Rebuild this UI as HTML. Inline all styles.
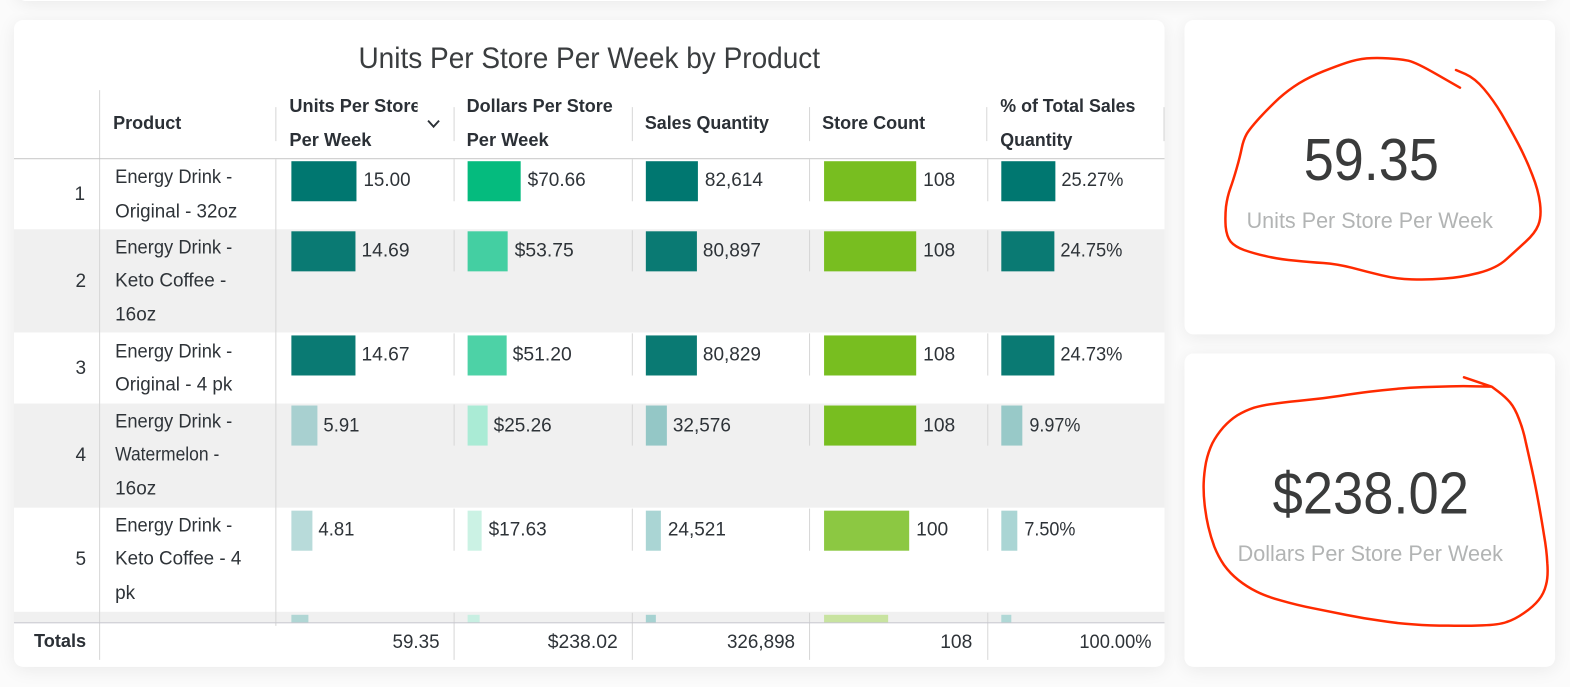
<!DOCTYPE html>
<html lang="en"><head><meta charset="utf-8"><title>Units Per Store Per Week by Product</title>
<style>
html,body{margin:0;padding:0;width:1570px;height:686px;overflow:hidden;background:#fbfbfb;font-family:"Liberation Sans",sans-serif}
.wrap{position:absolute;left:0;top:0;width:1570px;height:686px;transform:scale(1.0013);transform-origin:0 0}
.card{position:absolute;background:#fff;border-radius:9px;box-shadow:0 3px 18px rgba(0,0,0,.07)}
svg{position:absolute;left:0;top:0}
text{font-family:"Liberation Sans",sans-serif}
.v text{font-size:19px;fill:#2e3338}
.h text{font-size:18px;font-weight:bold;fill:#2b3036}
</style></head>
<body>
<div class="wrap">
<div class="card" style="left:17px;top:-40px;width:1533px;height:41px"></div>
<div class="card" style="left:14px;top:20px;width:1149px;height:646px"></div>
<div class="card" style="left:1182.5px;top:20px;width:370.5px;height:314px"></div>
<div class="card" style="left:1182.5px;top:353px;width:370.5px;height:313px"></div>
<svg width="1570" height="686" viewBox="0 0 1570 686">
<defs><clipPath id="c1"><rect x="280" y="90" width="137" height="40"/></clipPath></defs>
<g fill="#f0f0f0"><rect x="14" y="229" width="1149" height="103"/><rect x="14" y="403" width="1149" height="104"/><rect x="14" y="611" width="1149" height="11"/></g>
<g fill="#007770"><rect x="291" y="161" width="65" height="40"/><rect x="645" y="161" width="52" height="40"/><rect x="1000" y="161" width="54" height="40"/></g>
<rect x="467" y="161" width="53" height="40" fill="#05bb7e"/>
<g fill="#78be20"><rect x="823" y="161" width="92" height="40"/><rect x="823" y="231" width="92" height="40"/><rect x="823" y="335" width="92" height="40"/><rect x="823" y="405" width="92" height="40"/></g>
<g fill="#0a7a73"><rect x="291" y="231" width="64" height="40"/><rect x="645" y="231" width="51" height="40"/><rect x="1000" y="231" width="53" height="40"/><rect x="291" y="335" width="64" height="40"/><rect x="645" y="335" width="51" height="40"/><rect x="1000" y="335" width="53" height="40"/></g>
<rect x="467" y="231" width="40" height="40" fill="#44cfa2"/><rect x="467" y="335" width="39" height="40" fill="#4dd2a6"/>
<rect x="291" y="405" width="26" height="40" fill="#a8d0d0"/><rect x="467" y="405" width="20" height="40" fill="#aaebd5"/><rect x="645" y="405" width="21" height="40" fill="#94c7c6"/><rect x="1000" y="405" width="21" height="40" fill="#98c9c8"/>
<rect x="291" y="510" width="21" height="40" fill="#b8dbda"/><rect x="467" y="510" width="14" height="40" fill="#cbf2e4"/><rect x="645" y="510" width="15" height="40" fill="#aad5d4"/><rect x="823" y="510" width="85" height="40" fill="#8cc842"/><rect x="1000" y="510" width="16" height="40" fill="#aad5d4"/>
<rect x="291" y="614" width="17" height="8" fill="#b0d6d4"/><rect x="467" y="614" width="12" height="8" fill="#c8efe2"/><rect x="645" y="614" width="10" height="8" fill="#a6d2d1"/><rect x="823" y="614" width="64" height="8" fill="#c8e3a0"/><rect x="1000" y="614" width="10" height="8" fill="#b0d8d6"/>
<g stroke="#d6d6d6" stroke-width="1" fill="none">
<path d="M99.5 90V659M275.5 159V625M275.5 107V141M453.5 107V141M631.5 107V141M808.5 107V141M985.5 107V141M1162.5 107V141"/>
<path d="M453.5 159V201M631.5 159V201M808.5 159V201M986.5 159V201M453.5 230V271M631.5 230V271M808.5 230V271M986.5 230V271M453.5 333V375M631.5 333V375M808.5 333V375M986.5 333V375M453.5 404V445M631.5 404V445M808.5 404V445M986.5 404V445M453.5 508V550M631.5 508V550M808.5 508V550M986.5 508V550M453.5 612V659M631.5 612V659M808.5 612V659M986.5 612V659"/>
</g>
<rect x="14" y="158" width="1149" height="1" fill="#c6c6c6"/><rect x="14" y="621.5" width="1149" height="1" fill="#c6c6ce"/>
<text x="358" y="68" font-size="30" fill="#3a3d3f" textLength="461" lengthAdjust="spacingAndGlyphs">Units Per Store Per Week by Product</text>
<g class="h">
<text x="113" y="129" textLength="68" lengthAdjust="spacingAndGlyphs">Product</text>
<g clip-path="url(#c1)"><text x="289" y="112" textLength="131" lengthAdjust="spacingAndGlyphs">Units Per Store</text></g>
<text x="289" y="146" textLength="82" lengthAdjust="spacingAndGlyphs">Per Week</text>
<text x="466" y="112" textLength="146" lengthAdjust="spacingAndGlyphs">Dollars Per Store</text>
<text x="466" y="146" textLength="82" lengthAdjust="spacingAndGlyphs">Per Week</text>
<text x="644" y="129" textLength="124" lengthAdjust="spacingAndGlyphs">Sales Quantity</text>
<text x="821" y="129" textLength="103" lengthAdjust="spacingAndGlyphs">Store Count</text>
<text x="999" y="112" textLength="135" lengthAdjust="spacingAndGlyphs">% of Total Sales</text>
<text x="999" y="146" textLength="72" lengthAdjust="spacingAndGlyphs">Quantity</text>
<text x="34" y="646" textLength="52" lengthAdjust="spacingAndGlyphs">Totals</text>
</g>
<path d="M427.5 120.5L433 126.5L438.5 120.5" fill="none" stroke="#2b3036" stroke-width="1.9"/>
<g class="v">
<text x="85" y="199.5" text-anchor="end">1</text><text x="86" y="286.5" text-anchor="end">2</text><text x="86" y="373.5" text-anchor="end">3</text><text x="86" y="460.5" text-anchor="end">4</text><text x="86" y="564.5" text-anchor="end">5</text>
<text x="115" y="183" textLength="117" lengthAdjust="spacingAndGlyphs">Energy Drink -</text>
<text x="115" y="217" textLength="122" lengthAdjust="spacingAndGlyphs">Original - 32oz</text>
<text x="115" y="253" textLength="117" lengthAdjust="spacingAndGlyphs">Energy Drink -</text>
<text x="115" y="286" textLength="111" lengthAdjust="spacingAndGlyphs">Keto Coffee -</text>
<text x="115" y="320" textLength="41" lengthAdjust="spacingAndGlyphs">16oz</text>
<text x="115" y="357" textLength="117" lengthAdjust="spacingAndGlyphs">Energy Drink -</text>
<text x="115" y="390" textLength="117" lengthAdjust="spacingAndGlyphs">Original - 4 pk</text>
<text x="115" y="427" textLength="117" lengthAdjust="spacingAndGlyphs">Energy Drink -</text>
<text x="115" y="460" textLength="104" lengthAdjust="spacingAndGlyphs">Watermelon -</text>
<text x="115" y="494" textLength="41" lengthAdjust="spacingAndGlyphs">16oz</text>
<text x="115" y="531" textLength="117" lengthAdjust="spacingAndGlyphs">Energy Drink -</text>
<text x="115" y="564" textLength="126" lengthAdjust="spacingAndGlyphs">Keto Coffee - 4</text>
<text x="115" y="598" textLength="20" lengthAdjust="spacingAndGlyphs">pk</text>
<text x="363" y="186" textLength="47" lengthAdjust="spacingAndGlyphs">15.00</text><text x="527" y="186" textLength="58" lengthAdjust="spacingAndGlyphs">$70.66</text><text x="704" y="186" textLength="58" lengthAdjust="spacingAndGlyphs">82,614</text><text x="922" y="186" textLength="32" lengthAdjust="spacingAndGlyphs">108</text><text x="1060" y="186" textLength="62" lengthAdjust="spacingAndGlyphs">25.27%</text>
<text x="361" y="256" textLength="48" lengthAdjust="spacingAndGlyphs">14.69</text><text x="514" y="256" textLength="59" lengthAdjust="spacingAndGlyphs">$53.75</text><text x="702" y="256" textLength="58" lengthAdjust="spacingAndGlyphs">80,897</text><text x="922" y="256" textLength="32" lengthAdjust="spacingAndGlyphs">108</text><text x="1059" y="256" textLength="62" lengthAdjust="spacingAndGlyphs">24.75%</text>
<text x="361" y="360" textLength="48" lengthAdjust="spacingAndGlyphs">14.67</text><text x="512" y="360" textLength="59" lengthAdjust="spacingAndGlyphs">$51.20</text><text x="702" y="360" textLength="58" lengthAdjust="spacingAndGlyphs">80,829</text><text x="922" y="360" textLength="32" lengthAdjust="spacingAndGlyphs">108</text><text x="1059" y="360" textLength="62" lengthAdjust="spacingAndGlyphs">24.73%</text>
<text x="323" y="431" textLength="36" lengthAdjust="spacingAndGlyphs">5.91</text><text x="493" y="431" textLength="58" lengthAdjust="spacingAndGlyphs">$25.26</text><text x="672" y="431" textLength="58" lengthAdjust="spacingAndGlyphs">32,576</text><text x="922" y="431" textLength="32" lengthAdjust="spacingAndGlyphs">108</text><text x="1028" y="431" textLength="51" lengthAdjust="spacingAndGlyphs">9.97%</text>
<text x="318" y="535" textLength="36" lengthAdjust="spacingAndGlyphs">4.81</text><text x="488" y="535" textLength="58" lengthAdjust="spacingAndGlyphs">$17.63</text><text x="667" y="535" textLength="58" lengthAdjust="spacingAndGlyphs">24,521</text><text x="915" y="535" textLength="32" lengthAdjust="spacingAndGlyphs">100</text><text x="1023" y="535" textLength="51" lengthAdjust="spacingAndGlyphs">7.50%</text>
<text x="392" y="647" textLength="47" lengthAdjust="spacingAndGlyphs">59.35</text><text x="547" y="647" textLength="70" lengthAdjust="spacingAndGlyphs">$238.02</text><text x="726" y="647" textLength="68" lengthAdjust="spacingAndGlyphs">326,898</text><text x="939" y="647" textLength="32" lengthAdjust="spacingAndGlyphs">108</text><text x="1078" y="647" textLength="72" lengthAdjust="spacingAndGlyphs">100.00%</text>
</g>
<text x="1302" y="180" font-size="59" fill="#3a3b3b" textLength="135" lengthAdjust="spacingAndGlyphs">59.35</text>
<text x="1245" y="227.5" font-size="22.5" fill="#b2b4b4" textLength="246" lengthAdjust="spacingAndGlyphs">Units Per Store Per Week</text>
<text x="1271" y="513" font-size="59" fill="#3a3b3b" textLength="196" lengthAdjust="spacingAndGlyphs">$238.02</text>
<text x="1236" y="560.5" font-size="22.5" fill="#b2b4b4" textLength="265" lengthAdjust="spacingAndGlyphs">Dollars Per Store Per Week</text>
</svg>
</div>
<svg style="left:1210px;top:40px" width="340" height="255" viewBox="0 0 1020 765" fill="none" stroke="#ff2a00" stroke-width="7.5" stroke-linecap="round" stroke-linejoin="round">
<path d="M750,143 L680,103 Q620,68 595,62 Q570,57 535,55 Q500,53 470,55 Q440,58 410,68 Q380,78 340,94 Q300,110 267,130 Q235,150 207,175 Q180,200 150,232 Q120,265 110,282 Q100,300 95,325 Q90,350 80,385 Q70,420 61,445 Q52,470 48,500 Q45,530 47,560 Q50,590 62,605 Q75,620 102,630 Q130,640 170,649 Q210,658 255,662 Q300,667 340,669 Q380,672 425,683 Q470,695 515,706 Q560,717 605,718 Q650,720 700,716 Q750,713 805,699 Q860,685 890,657 Q920,630 947,605 Q975,580 985,555 Q995,530 990,490 Q985,450 967,405 Q950,360 925,312 Q900,265 875,222 Q850,180 822,147 Q795,115 766,102 L738,90"/>
</svg>
<svg style="left:1190px;top:370px" width="360" height="270" viewBox="0 0 1080 810" fill="none" stroke="#ff2a00" stroke-width="7.5" stroke-linecap="round" stroke-linejoin="round">
<path d="M905,50 L860,49 Q820,48 780,49 Q740,50 700,51.5 Q660,53 620,56.5 Q580,60 540,65 Q500,70 450,77.5 Q400,85 350,90 Q300,95 260,100 Q220,105 192,113 Q165,122 142,136 Q120,150 100,172 Q80,195 67,220 Q55,245 48,277 Q42,310 41,340 Q40,370 44,405 Q48,440 55,470 Q62,500 73,530 Q85,560 102,585 Q120,610 145,630 Q170,650 200,665 Q230,680 275,692 Q320,705 370,715 Q420,725 470,735 Q520,745 570,752 Q620,760 670,763 Q720,767 775,767 Q830,768 877,766 Q925,765 950,756 Q975,748 1002,729 Q1030,710 1046,690 Q1062,670 1068,645 Q1075,620 1072,580 Q1070,540 1062,495 Q1055,450 1045,395 Q1035,340 1025,295 Q1015,250 1007,215 Q1000,180 987,147 Q975,115 960,97 Q945,80 925,65 L905,50 L822,22"/>
</svg>
</body></html>
